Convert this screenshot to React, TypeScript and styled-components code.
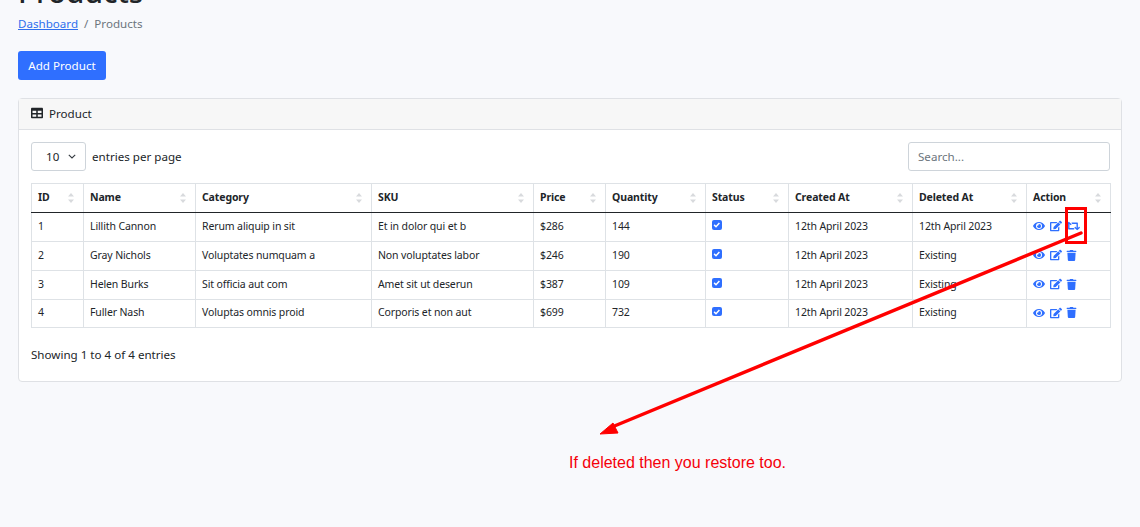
import React from 'react';
import styled, { createGlobalStyle } from 'styled-components';
import { FaEdit, FaEye, FaRetweet, FaTable, FaTrash } from 'react-icons/fa';

const GlobalStyle = createGlobalStyle`
  html, body {
    margin: 0;
    height: 527px;
    overflow: hidden;
    background: #f8f9fc;
    font-family: "Noto Sans", "Open Sans", sans-serif;
    font-size: 11.6px;
    color: #212529;
  }
`;

const Page = styled.main`
  position: relative;
  height: 527px;
  overflow: hidden;
  padding: 0 18px;
  box-sizing: border-box;
`;

const Title = styled.h1`
  margin: -25px 0 6px;
  height: 34px;
  line-height: 34px;
  font-size: 29.6px;
  font-weight: 500;
`;

const Breadcrumb = styled.div`
  display: flex;
  gap: 6px;
  height: 18px;
  line-height: 18px;
  color: #6c757d;
  a {
    color: #2f6fed;
    text-decoration: underline;
  }
`;

const AddButton = styled.button`
  display: block;
  margin-top: 18px;
  width: 88px;
  height: 29px;
  padding: 0;
  border: 0;
  border-radius: 3px;
  background: #2f6fff;
  color: #fff;
  font: inherit;
`;

const Card = styled.section`
  margin-top: 18px;
  width: 1104px;
  height: 284px;
  box-sizing: border-box;
  border: 1px solid #dfe1e5;
  border-radius: 4px;
  background: #fff;
`;

const CardHeader = styled.header`
  display: flex;
  align-items: center;
  gap: 6px;
  height: 31px;
  box-sizing: border-box;
  padding: 0 12px 2px;
  background: #f7f7f7;
  border-bottom: 1px solid #dfe1e5;
  svg {
    font-size: 12px;
    color: #212529;
  }
`;

const CardBody = styled.div`
  padding: 12px 11px 0 12px;
`;

const Controls = styled.div`
  display: flex;
  justify-content: space-between;
  align-items: center;
  height: 29px;
`;

const PerPage = styled.div`
  display: flex;
  align-items: center;
  gap: 6px;
  padding-bottom: 1px;
`;

const SelectBox = styled.div`
  display: flex;
  align-items: center;
  gap: 9px;
  width: 55px;
  height: 29px;
  box-sizing: border-box;
  padding-left: 14px;
  border: 1px solid #ced4da;
  border-radius: 3px;
  background: #fff;
  svg {
    width: 8px;
    height: 5px;
  }
`;

const Search = styled.input`
  width: 202px;
  height: 29px;
  box-sizing: border-box;
  padding: 0 9px;
  border: 1px solid #ced4da;
  border-radius: 3px;
  font: inherit;
  &::placeholder {
    color: #6c757d;
  }
`;

const Table = styled.table`
  margin-top: 12px;
  width: 1079px;
  table-layout: fixed;
  border-collapse: collapse;
  font-size: 10.5px;
  letter-spacing: -0.12px;
  th, td {
    border: 1px solid #dee2e6;
    height: 29px;
    box-sizing: border-box;
    padding: 0 6px 3px;
    text-align: left;
    white-space: nowrap;
    overflow: hidden;
  }
  th {
    font-weight: 700;
    border-bottom: 1px solid #212529;
  }
  tbody tr:last-child td {
    height: 28px;
  }
`;

const HeadInner = styled.div`
  display: flex;
  align-items: center;
  justify-content: space-between;
  padding-right: 3px;
`;

const Sorter = styled.svg`
  width: 6px;
  height: 10px;
  flex: none;
  margin-top: 3px;
  fill: #d8dadd;
`;

const Tick = styled.span`
  display: block;
  width: 9.5px;
  height: 9.5px;
  margin-top: -1px;
  border-radius: 2px;
  background: #2f6fff;
  svg {
    display: block;
    width: 9.5px;
    height: 9.5px;
  }
`;

const Actions = styled.div`
  display: flex;
  align-items: center;
  gap: 5px;
  margin-top: 1px;
  color: #2f6fff;
  font-size: 12px;
  svg {
    display: block;
  }
`;

const RestoreIcon = styled(FaRetweet)`
  font-size: 14px;
  margin-left: -1px;
`;

const DeleteIcon = styled(FaTrash)`
  font-size: 11px;
  margin-left: -1px;
`;

const Entries = styled.p`
  margin: 19px 0 0;
  line-height: 16px;
`;

const Annotation = styled.svg`
  position: absolute;
  inset: 0;
  width: 1140px;
  height: 527px;
  pointer-events: none;
`;

const Note = styled.div`
  position: absolute;
  left: 569px;
  top: 453px;
  color: #f5000a;
  font-family: "Liberation Sans", Arial, sans-serif;
  font-size: 16px;
  line-height: 19px;
`;

const columns: [string, number][] = [
  ['ID', 52],
  ['Name', 112],
  ['Category', 176],
  ['SKU', 162],
  ['Price', 72],
  ['Quantity', 100],
  ['Status', 83],
  ['Created At', 124],
  ['Deleted At', 114],
  ['Action', 84],
];

const rows = [
  { id: 1, name: 'Lillith Cannon', category: 'Rerum aliquip in sit', sku: 'Et in dolor qui et b', price: '$286', qty: 144, deleted: '12th April 2023' },
  { id: 2, name: 'Gray Nichols', category: 'Voluptates numquam a', sku: 'Non voluptates labor', price: '$246', qty: 190, deleted: 'Existing' },
  { id: 3, name: 'Helen Burks', category: 'Sit officia aut com', sku: 'Amet sit ut deserun', price: '$387', qty: 109, deleted: 'Existing' },
  { id: 4, name: 'Fuller Nash', category: 'Voluptas omnis proid', sku: 'Corporis et non aut', price: '$699', qty: 732, deleted: 'Existing' },
];

function SortIcon() {
  return (
    <Sorter viewBox="0 0 6 10">
      <path d="M3 0 6 3.6H0zM0 6.4h6L3 10z" />
    </Sorter>
  );
}

export default function App() {
  return (
    <>
      <GlobalStyle />
      <Page>
        <Title>Products</Title>
        <Breadcrumb>
          <a href="#dashboard">Dashboard</a>
          <span>/</span>
          <span>Products</span>
        </Breadcrumb>
        <AddButton type="button">Add Product</AddButton>
        <Card>
          <CardHeader>
            <FaTable />
            Product
          </CardHeader>
          <CardBody>
            <Controls>
              <PerPage>
                <SelectBox>
                  10
                  <svg viewBox="0 0 8 5" fill="none" stroke="#343a40" strokeWidth="1.1">
                    <path d="M.8.8 4 4 7.2.8" />
                  </svg>
                </SelectBox>
                entries per page
              </PerPage>
              <Search placeholder="Search..." />
            </Controls>
            <Table>
              <colgroup>
                {columns.map(([label, width]) => (
                  <col key={label} width={width} />
                ))}
              </colgroup>
              <thead>
                <tr>
                  {columns.map(([label]) => (
                    <th key={label}>
                      <HeadInner>
                        {label}
                        <SortIcon />
                      </HeadInner>
                    </th>
                  ))}
                </tr>
              </thead>
              <tbody>
                {rows.map((row) => (
                  <tr key={row.id}>
                    <td>{row.id}</td>
                    <td>{row.name}</td>
                    <td>{row.category}</td>
                    <td>{row.sku}</td>
                    <td>{row.price}</td>
                    <td>{row.qty}</td>
                    <td>
                      <Tick>
                        <svg viewBox="0 0 9 9" fill="none" stroke="#fff" strokeWidth="1.4">
                          <path d="M2 4.6 3.8 6.4 7 2.8" />
                        </svg>
                      </Tick>
                    </td>
                    <td>12th April 2023</td>
                    <td>{row.deleted}</td>
                    <td>
                      <Actions>
                        <FaEye />
                        <FaEdit />
                        {row.id === 1 ? <RestoreIcon /> : <DeleteIcon />}
                      </Actions>
                    </td>
                  </tr>
                ))}
              </tbody>
            </Table>
            <Entries>Showing 1 to 4 of 4 entries</Entries>
          </CardBody>
        </Card>
        <Annotation viewBox="0 0 1140 527">
          <rect x="1066.5" y="208.5" width="19" height="34" fill="none" stroke="#ff0000" strokeWidth="3" />
          <path d="M1081 233 612 427" stroke="#ff0000" strokeWidth="3.4" strokeLinecap="round" />
          <path d="M600 434 613 423 618 433z" fill="#ff0000" stroke="#ff0000" />
        </Annotation>
        <Note>If deleted then you restore too.</Note>
      </Page>
    </>
  );
}
